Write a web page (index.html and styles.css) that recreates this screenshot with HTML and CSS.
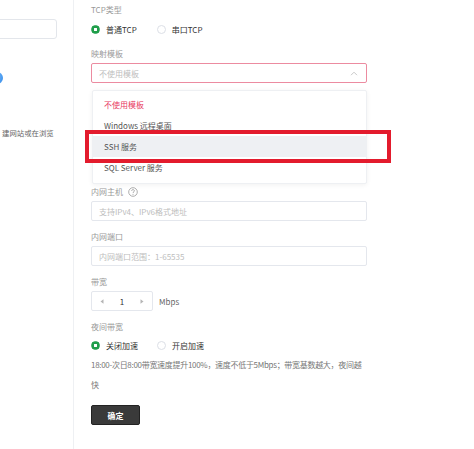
FILE: index.html
```html
<!DOCTYPE html>
<html lang="zh">
<head>
<meta charset="utf-8">
<title>映射配置</title>
<link rel="stylesheet" href="styles.css">
</head>
<body>
<div class="page">
  <aside class="side">
    <div class="side-input"></div>
    <div class="side-knob"></div>
    <div class="side-text">建网站或在浏览</div>
  </aside>
  <main class="form">
    <div class="label first">TCP类型</div>
    <div class="radios r1">
      <span class="opt"><i class="radio on"></i>普通TCP</span>
      <span class="opt"><i class="radio"></i>串口TCP</span>
    </div>

    <div class="label l2">映射模板</div>
    <div class="select-wrap">
      <div class="select">
        <span class="ph">不使用模板</span>
        <svg class="chev" width="8" height="5" viewBox="0 0 8 5"><path d="M1 4.2 L4 1.2 L7 4.2" fill="none" stroke="#c8c8c8" stroke-width="1"/></svg>
      </div>
      <ul class="menu">
        <li class="item active">不使用模板</li>
        <li class="item">Windows 远程桌面</li>
        <li class="item hover">SSH 服务</li>
        <li class="item">SQL Server 服务</li>
        <li class="mark"></li>
      </ul>
    </div>

    <div class="label">内网主机
      <svg class="help" width="10" height="10" viewBox="0 0 10 10"><circle cx="5" cy="5" r="4.3" fill="none" stroke="#999" stroke-width="0.8"/><path d="M3.6 3.9 C3.6 2.2 6.4 2.2 6.4 3.8 C6.4 4.8 5 4.9 5 6" fill="none" stroke="#999" stroke-width="0.8"/><circle cx="5" cy="7.3" r="0.5" fill="#999"/></svg>
    </div>
    <div class="input"><span class="ph">支持IPv4、IPv6格式地址</span></div>

    <div class="label">内网端口</div>
    <div class="input"><span class="ph">内网端口范围：1-65535</span></div>

    <div class="label">带宽</div>
    <div class="bw">
      <div class="stepper">
        <svg width="4" height="5" viewBox="0 0 4 5"><path d="M3.5 0.3 L0.5 2.5 L3.5 4.7 Z" fill="#b5b5b5"/></svg>
        <span class="num">1</span>
        <svg width="4" height="5" viewBox="0 0 4 5"><path d="M0.5 0.3 L3.5 2.5 L0.5 4.7 Z" fill="#b5b5b5"/></svg>
      </div>
      <span class="unit">Mbps</span>
    </div>

    <div class="label">夜间带宽</div>
    <div class="radios r2">
      <span class="opt"><i class="radio on"></i>关闭加速</span>
      <span class="opt"><i class="radio"></i>开启加速</span>
    </div>
    <p class="note">18:00-次日8:00带宽速度提升100%，速度不低于5Mbps；带宽基数越大，夜间越快</p>
    <button class="btn">确定</button>
  </main>
</div>
</body>
</html>
```

FILE: styles.css
```css
html, body {
  margin: 0;
  padding: 0;
  background: #fff;
}
body {
  font-family: "Noto Sans CJK SC", "Noto Sans", "Liberation Sans", sans-serif;
  font-size: 8px;
  color: #333;
  width: 474px;
  height: 449px;
  overflow: hidden;
}
.page {
  display: flex;
  height: 449px;
}
.side {
  width: 73px;
  border-right: 1px solid #eef0f3;
  overflow: hidden;
  flex: none;
}
.side-input {
  margin: 19px 0 0 -40px;
  width: 95px;
  height: 18px;
  border: 1px solid #e3e6eb;
  border-radius: 3px;
}
.side-knob {
  margin: 33px 0 0 -9px;
  width: 12px;
  height: 12px;
  border-radius: 50%;
  background: radial-gradient(circle at 35% 35%, #7cc0ff, #2f86e6);
}
.side-text {
  margin: 43px 0 0 2px;
  font-size: 7.4px;
  line-height: 12px;
  color: #666;
  white-space: nowrap;
}
.form {
  padding: 4px 0 0 17px;
  width: 276px;
  flex: none;
}
.label {
  display: flex;
  align-items: center;
  gap: 5px;
  height: 12px;
  line-height: 12px;
  color: #999;
  margin: 10px 0 3px;
}
.label.first { margin-top: 0; }
.label.l2 { margin-top: 13px; }
.help { flex: none; }
.radios {
  display: flex;
  height: 12px;
  align-items: center;
  color: #333;
}
.radios.r1 { margin-top: 7px; }
.radios.r2 { margin-top: 6px; }
.opt {
  display: flex;
  align-items: center;
  margin-right: 20px;
}
.radio {
  display: inline-block;
  width: 7px;
  height: 7px;
  border: 1px solid #dcdfe6;
  border-radius: 50%;
  margin-right: 6px;
  box-sizing: content-box;
}
.radio.on {
  border-color: #1f9e4a;
  background: radial-gradient(circle, #fff 0 1.4px, #1f9e4a 1.8px);
}
.r2 .opt:first-child { margin-right: 19px; }
.select-wrap {
  position: relative;
  margin-bottom: 103px;
}
.select, .input {
  box-sizing: border-box;
  height: 20px;
  border: 1px solid #e4e7ed;
  border-radius: 2px;
  display: flex;
  align-items: center;
  padding: 0 7px;
  width: 276px;
}
.select {
  border-color: #ec8ba0;
  justify-content: space-between;
}
.chev { margin-right: 1px; }
.ph { color: #bdbdbd; }
.menu {
  position: absolute;
  top: 27px;
  left: 1px;
  right: 0;
  margin: 0;
  padding: 3px 0 5px;
  list-style: none;
  background: #fff;
  border: 1px solid #eef0f3;
  border-radius: 2px;
  box-shadow: 0 1px 5px rgba(0, 0, 0, 0.06);
}
.item {
  height: 21px;
  line-height: 21px;
  padding-left: 11px;
  color: #555;
}
.item.active { color: #e8385f; }
.item.hover { background: #eef0f3; }
.mark {
  position: absolute;
  left: -8px;
  top: 39px;
  width: 298px;
  height: 25px;
  border: 4px solid #e31b2d;
}
.bw {
  display: flex;
  align-items: center;
}
.stepper {
  box-sizing: border-box;
  width: 62px;
  height: 20px;
  border: 1px solid #e4e7ed;
  border-radius: 2px;
  display: flex;
  align-items: center;
  justify-content: space-between;
  padding: 0 8px;
}
.num { color: #333; }
.unit {
  margin-left: 6px;
  color: #666;
}
.note {
  margin: 4px 0 0;
  line-height: 20px;
  color: #777;
  letter-spacing: -0.3px;
}
.btn {
  display: block;
  margin-top: 10px;
  width: 49px;
  height: 20px;
  border: 1px solid #222;
  border-radius: 2px;
  background: #3a3a3a;
  color: #fff;
  font-family: inherit;
  font-size: 8px;
  font-weight: 700;
  padding: 0;
}
```
